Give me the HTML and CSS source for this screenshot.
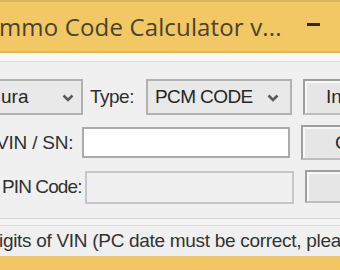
FILE: index.html
```html
<!DOCTYPE html>
<html>
<head>
<meta charset="utf-8">
<link rel="stylesheet" href="styles.css">
</head>
<body>
<div class="win">
  <div class="titlebar">
    <span class="title">mmo Code Calculator v...</span>
    <span class="min"></span>
  </div>
  <div class="band"></div>
  <div class="form">
    <div class="row r1">
      <div class="combo c1"><span class="ctext">ura</span><svg class="chev" width="12" height="8" viewBox="0 0 12 8"><path d="M1.5 1.5 L6 6 L10.5 1.5" fill="none" stroke="#5a5a5a" stroke-width="2.6"/></svg></div>
      <span class="lbl type">Type:</span>
      <div class="combo c2"><span class="ctext">PCM CODE</span><svg class="chev" width="12" height="8" viewBox="0 0 12 8"><path d="M1.5 1.5 L6 6 L10.5 1.5" fill="none" stroke="#5a5a5a" stroke-width="2.6"/></svg></div>
      <div class="btn b1"><span>Info</span></div>
    </div>
    <div class="row r2">
      <span class="lbl vin">VIN / SN:</span>
      <div class="input"></div>
      <div class="btn b2"><span>Calc</span></div>
    </div>
    <div class="row r3">
      <span class="lbl pin">PIN Code:</span>
      <div class="input disabled"></div>
      <div class="btn b3"><span></span></div>
    </div>
  </div>
  <div class="status"><span>igits of VIN (PC date must be correct, please</span></div>
  <div class="bottombar"></div>
</div>
</body>
</html>
```
FILE: styles.css
```css
html, body {
  margin: 0;
  padding: 0;
  width: 340px;
  height: 270px;
  overflow: hidden;
  background: #f0f0f0;
}
.win {
  width: 340px;
  height: 270px;
  display: flex;
  flex-direction: column;
  font-family: "Liberation Sans", Arial, sans-serif;
  color: #2e2e2e;
  overflow: hidden;
}
.titlebar {
  height: 49px;
  flex: none;
  background: #f1c864;
  border-top: 2px solid #dcb65e;
  border-bottom: 2px solid #dcb860;
  display: flex;
  align-items: center;
  justify-content: space-between;
}
.title {
  font-family: "Open Sans", "Noto Sans", sans-serif;
  font-size: 24px;
  color: #4a4330;
  margin-left: -1px;
  white-space: nowrap;
  letter-spacing: 0.15px;
}
.min {
  flex: none;
  width: 13px;
  height: 3px;
  background: #2c2a22;
  margin-right: 20px;
  margin-top: -4px;
}
.band {
  height: 8px;
  flex: none;
  background: #f7f7f7;
  border-bottom: 1px solid #dedede;
}
.form {
  flex: none;
  display: flex;
  flex-direction: column;
  padding-top: 17px;
}
.row {
  display: flex;
  align-items: center;
  white-space: nowrap;
}
.row > * { flex: none; }
.r1 { height: 36px; }
.r2 { height: 35px; margin-top: 10px; }
.r3 { height: 34px; margin-top: 10px; }
.combo {
  box-sizing: border-box;
  height: 36px;
  background: #e9e9e9;
  border: 2px solid #b2b2b2;
  display: flex;
  align-items: center;
  justify-content: space-between;
  font-size: 19px;
  color: #262626;
}
.c1 {
  width: 95px;
  margin-left: -12px;
  padding: 0 7px 0 11px;
}
.c2 {
  width: 146px;
  margin-left: 9px;
  padding: 0 11px 0 7px;
  letter-spacing: -0.6px;
}
.chev { display: block; margin-top: 1px; }
.lbl {
  font-size: 19px;
  color: #303030;
}
.type {
  margin-left: 7px;
  width: 47px;
  letter-spacing: -0.5px;
}
.vin { width: 86px; margin-left: -4px; letter-spacing: -0.2px; }
.pin { width: 84px; margin-left: 2px; letter-spacing: -0.9px; }
.input {
  box-sizing: border-box;
  width: 208px;
  height: 31px;
  background: #ffffff;
  border: 2px solid #ababab;
}
.r3 .input { margin-left: -1px; width: 209px; height: 33px; background: #f0f0f0; border-color: #c6c6c6; }
.btn {
  box-sizing: border-box;
  width: 80px;
  margin-left: 11px;
  background: #e6e6e6;
  border: 2px solid #9e9e9e;
  border-right-color: #bdbdbd;
  border-bottom-color: #bdbdbd;
  box-shadow: inset 2px 2px 0 #f8f8f8;
  font-size: 19px;
  color: #262626;
  display: flex;
  align-items: center;
}
.b1 { height: 36px; padding-left: 21px; }
.b2 { height: 35px; padding-left: 32px; }
.b3 { height: 33px; margin-top: -2px; }
.status {
  flex: none;
  margin-top: 14px;
  height: 33px;
  border-top: 1px solid #d6d6d6;
  box-shadow: inset 0 6px 0 #f4f4f4, inset 0 7px 0 #dcdcdc;
  display: flex;
  align-items: flex-end;
  padding-bottom: 4px;
  box-sizing: content-box;
  font-size: 19px;
  color: #333333;
  white-space: nowrap;
  overflow: hidden;
  letter-spacing: -0.3px;
}
.status span { margin-left: -1px; }
.bottombar {
  flex: 1;
  background: #f1c663;
}
```
